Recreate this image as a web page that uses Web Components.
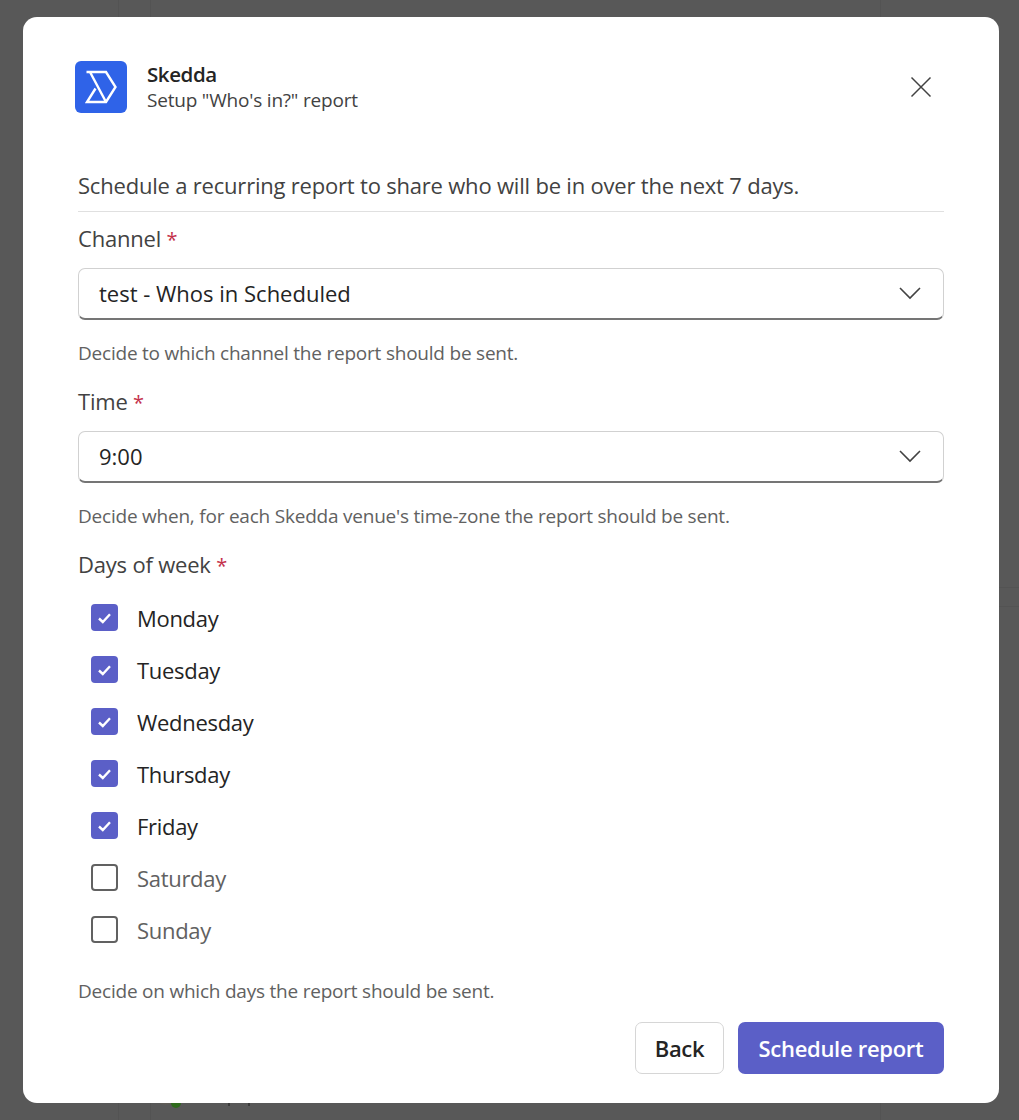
<!DOCTYPE html>
<html>
<head>
<meta charset="utf-8">
<title>Skedda</title>
<style>
  html, body { margin: 0; height: 100%; }
  body { background: #585858; font-family: "Open Sans", "Noto Sans", sans-serif; color: #242424; overflow: hidden; }
</style>
</head>
<body>
<sk-backdrop></sk-backdrop>
<sk-dialog>
  <sk-header slot="header" title-text="Skedda" sub-text='Setup "Who&#39;s in?" report'></sk-header>
  <p class="intro" slot="intro">Schedule a recurring report to share who will be in over the next 7 days.</p>

  <sk-field label="Channel" hint="Decide to which channel the report should be sent." first>
    <sk-select value="test - Whos in Scheduled"></sk-select>
  </sk-field>
  <sk-field label="Time" hint="Decide when, for each Skedda venue's time-zone the report should be sent.">
    <sk-select value="9:00"></sk-select>
  </sk-field>
  <sk-field label="Days of week" hint="Decide on which days the report should be sent." days>
    <sk-check checked>Monday</sk-check>
    <sk-check checked>Tuesday</sk-check>
    <sk-check checked>Wednesday</sk-check>
    <sk-check checked>Thursday</sk-check>
    <sk-check checked>Friday</sk-check>
    <sk-check>Saturday</sk-check>
    <sk-check>Sunday</sk-check>
  </sk-field>

  <sk-button slot="footer">Back</sk-button>
  <sk-button slot="footer" primary>Schedule report</sk-button>
</sk-dialog>

<script>
const FONT = '"Open Sans", "Noto Sans", sans-serif';

// the dimmed app behind the dialog, only a few bits show
customElements.define("sk-backdrop", class extends HTMLElement {
  constructor() {
    super();
    this.attachShadow({ mode: "open" }).innerHTML = `
      <style>
        :host { position: fixed; inset: 0; z-index: -1; display: block; }
        div { position: absolute; }
        .v { top: 0; bottom: 0; width: 1px; background: #535353; }
        .h { left: 999px; right: 0; height: 1px; background: #535353; }
        .avatar { left: 155px; top: 1084px; width: 21px; height: 21px; border-radius: 50%; background: #5f5c57; }
        .dot { left: 171px; top: 1098px; width: 10px; height: 10px; border-radius: 50%; background: #2f6a1c; }
        .speck { top: 1103px; width: 2px; height: 3px; background: #3a3a3a; }
      </style>
      <div class="v" style="left:118px"></div>
      <div class="v" style="left:150px"></div>
      <div class="v" style="left:880px"></div>
      <div class="h" style="top:587px"></div>
      <div class="h" style="top:606px"></div>
      <div class="avatar"></div>
      <div class="dot"></div>
      <div class="speck" style="left:228px"></div>
      <div class="speck" style="left:248px"></div>`;
  }
});

customElements.define("sk-dialog", class extends HTMLElement {
  constructor() {
    super();
    this.attachShadow({ mode: "open" }).innerHTML = `
      <style>
        :host { display: block; padding: 17px 20px 0 23px; box-sizing: border-box; }
        .card {
          background: #fff; border-radius: 14px; height: 1086px; box-sizing: border-box;
          padding: 44px 55px 0 55px; display: flex; flex-direction: column;
          font-family: ${FONT};
        }
        .intro { border-bottom: 1.5px solid #e0e0e0; height: 40.5px; margin-top: 57px; }
        ::slotted(p) { margin: 0; font-size: 22px; line-height: 31px; color: #424242; letter-spacing: -.2px; }
        .fields { display: flex; flex-direction: column; }
        .footer { display: flex; justify-content: flex-end; gap: 14px; margin-top: 18px; }
      </style>
      <div class="card">
        <slot name="header"></slot>
        <div class="intro"><slot name="intro"></slot></div>
        <div class="fields"><slot></slot></div>
        <div class="footer"><slot name="footer"></slot></div>
      </div>`;
  }
});

customElements.define("sk-header", class extends HTMLElement {
  constructor() {
    super();
    this.attachShadow({ mode: "open" }).innerHTML = `
      <style>
        :host { display: flex; align-items: center; height: 52px; margin-left: -3px; }
        .logo { width: 52px; height: 52px; flex: none; display: block; }
        .txt { margin-left: 20px; flex: 1; }
        .t { font-size: 20.5px; font-weight: 600; line-height: 27px; color: #242424; letter-spacing: -.4px; }
        .s { font-size: 19px; line-height: 25px; color: #424242; letter-spacing: -.2px; }
        .close { width: 26px; height: 26px; flex: none; margin-right: 10px; display: block; }
      </style>
      <svg class="logo" viewBox="0 0 52 52">
        <rect width="52" height="52" rx="6" fill="#2f63e8"/>
        <path d="M11.5 11H31L40.5 26L31 41H12L20.5 27.5M15 11L31 41" fill="none" stroke="#fff" stroke-width="2.4"/>
      </svg>
      <div class="txt">
        <div class="t">${this.getAttribute("title-text")}</div>
        <div class="s">${this.getAttribute("sub-text")}</div>
      </div>
      <svg class="close" viewBox="0 0 26 26">
        <path d="M3.5 3.5L22.5 22.5M22.5 3.5L3.5 22.5" fill="none" stroke="#424242" stroke-width="1.5"/>
      </svg>`;
  }
});

customElements.define("sk-field", class extends HTMLElement {
  constructor() {
    super();
    const days = this.hasAttribute("days");
    const first = this.hasAttribute("first");
    this.attachShadow({ mode: "open" }).innerHTML = `
      <style>
        :host { display: block; }
        label { display: block; font-size: 22px; line-height: 31px; height: 31px; margin-top: ${first ? 11 : 20}px; color: #424242; letter-spacing: -.2px; }
        label span { color: #c4314b; font-size: 20px; }
        .body { margin-top: 14px; display: block; }
        .days { margin-top: 12px; display: flex; flex-direction: column; }
        .hint { font-size: 19px; line-height: 25px; color: #616161; margin-top: ${days ? 23 : 21}px; letter-spacing: -.22px; }
      </style>
      <label>${this.getAttribute("label")} <span>*</span></label>
      <div class="${days ? "days" : "body"}"><slot></slot></div>
      <div class="hint">${this.getAttribute("hint")}</div>`;
  }
});

customElements.define("sk-select", class extends HTMLElement {
  constructor() {
    super();
    this.attachShadow({ mode: "open" }).innerHTML = `
      <style>
        :host {
          display: flex; align-items: center; justify-content: space-between; box-sizing: border-box;
          height: 52px; padding: 0 21px 1px 20px; background: #fff; border: 1px solid #d1d1d1;
          border-bottom: 2px solid #757575; border-radius: 7px; font-size: 22px; color: #242424;
        }
        svg { width: 24px; height: 14px; display: block; margin-top: 1px; }
      </style>
      <span>${this.getAttribute("value")}</span>
      <svg viewBox="0 0 24 14"><path d="M2 2L12 12L22 2" fill="none" stroke="#424242" stroke-width="1.6"/></svg>`;
  }
});

customElements.define("sk-check", class extends HTMLElement {
  constructor() {
    super();
    const on = this.hasAttribute("checked");
    this.attachShadow({ mode: "open" }).innerHTML = `
      <style>
        :host { display: flex; align-items: center; height: 52px; padding-left: 13px; font-size: 22px; color: ${on ? "#242424" : "#616161"}; letter-spacing: -.3px; }
        .box { width: 27px; height: 27px; box-sizing: border-box; border-radius: 4px; flex: none; margin-right: 19px;
               background: ${on ? "#5b5fc7" : "#fff"}; border: ${on ? "none" : "2px solid #616161"};
               display: flex; align-items: center; justify-content: center; }
        svg { width: 15px; height: 12px; display: ${on ? "block" : "none"}; }
      </style>
      <div class="box"><svg viewBox="0 0 15 12"><path d="M2 6.5L5.8 10L13 2.2" fill="none" stroke="#fff" stroke-width="2.4"/></svg></div>
      <slot></slot>`;
  }
});

customElements.define("sk-button", class extends HTMLElement {
  constructor() {
    super();
    const p = this.hasAttribute("primary");
    this.attachShadow({ mode: "open" }).innerHTML = `
      <style>
        :host { display: flex; align-items: center; justify-content: center; box-sizing: border-box; height: 52px;
                width: ${p ? 206 : 89}px; border-radius: 7px; font-size: 22px; font-weight: 600; letter-spacing: -.3px;
                background: ${p ? "#5b5fc7" : "#fff"}; color: ${p ? "#fff" : "#242424"};
                border: ${p ? "none" : "1.5px solid #d6d6d6"}; }
      </style>
      <slot></slot>`;
  }
});
</script>
</body>
</html>
